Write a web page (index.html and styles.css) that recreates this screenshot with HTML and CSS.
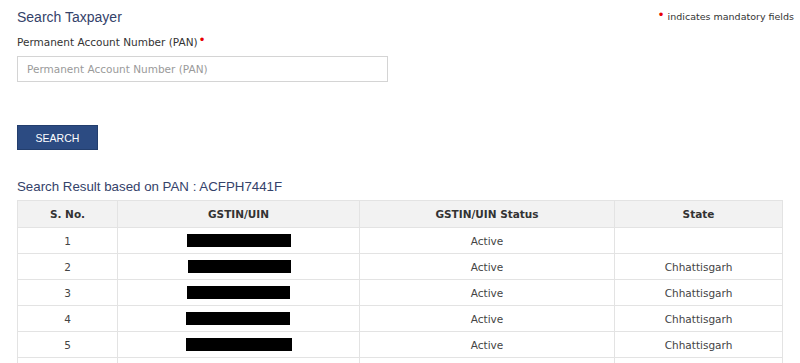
FILE: index.html
```html
<!DOCTYPE html>
<html>
<head>
  <link rel="stylesheet" href="styles.css">
</head>
<body>
  <div class="page">
    <div class="top-row">
      <h2 class="page-title">Search Taxpayer</h2>
      <p class="mandatory-note"><span class="req-dot">&bull;</span> indicates mandatory fields</p>
    </div>

    <form class="search-form">
      <label class="field-label" for="pan">Permanent Account Number (PAN)<span class="req">&bull;</span></label>
      <input type="text" id="pan" class="text-input" placeholder="Permanent Account Number (PAN)">
      <button type="button" class="search-button">SEARCH</button>
    </form>

    <h3 class="result-title">Search Result based on PAN : ACFPH7441F</h3>

    <table class="result-table">
      <thead>
        <tr>
          <th class="col-sno">S. No.</th>
          <th class="col-gstin">GSTIN/UIN</th>
          <th class="col-status">GSTIN/UIN Status</th>
          <th>State</th>
        </tr>
      </thead>
      <tbody>
        <tr>
          <td>1</td>
          <td><span class="masked" style="width: 104px;"></span></td>
          <td>Active</td>
          <td></td>
        </tr>
        <tr>
          <td>2</td>
          <td><span class="masked" style="width: 103px; margin-left: 2px;"></span></td>
          <td>Active</td>
          <td>Chhattisgarh</td>
        </tr>
        <tr>
          <td>3</td>
          <td><span class="masked" style="width: 103px;"></span></td>
          <td>Active</td>
          <td>Chhattisgarh</td>
        </tr>
        <tr>
          <td>4</td>
          <td><span class="masked" style="width: 104px; margin-left: -2px;"></span></td>
          <td>Active</td>
          <td>Chhattisgarh</td>
        </tr>
        <tr>
          <td>5</td>
          <td><span class="masked" style="width: 106px;"></span></td>
          <td>Active</td>
          <td>Chhattisgarh</td>
        </tr>
        <tr>
          <td></td>
          <td></td>
          <td></td>
          <td></td>
        </tr>
      </tbody>
    </table>
  </div>
</body>
</html>
```

FILE: styles.css
```css
html, body {
  margin: 0;
  padding: 0;
  background-color: #ffffff;
  overflow: hidden;
}

body {
  font-family: "DejaVu Sans", Verdana, sans-serif;
  color: #333333;
}

.page {
  width: 766px;
  padding: 0 0 0 17px;
}

.top-row {
  display: flex;
  justify-content: space-between;
  align-items: flex-start;
  height: 33px;
}

.page-title {
  margin: 9px 0 0 0;
  font-family: "Liberation Sans", Arial, sans-serif;
  font-size: 14px;
  font-weight: normal;
  color: #34426a;
}

.mandatory-note {
  margin: 8px -11px 0 0;
  font-size: 9.5px;
  color: #333333;
}

.req-dot,
.req {
  color: #e80000;
  font-size: 12px;
}

.req-dot {
  vertical-align: 1px;
}

.req {
  vertical-align: 2px;
  margin-left: 1px;
}

.search-form {
  display: flex;
  flex-direction: column;
  align-items: flex-start;
}

.field-label {
  font-size: 10.5px;
  color: #333333;
  height: 23px;
}

.text-input {
  width: 371px;
  height: 26px;
  box-sizing: border-box;
  border: 1px solid #d4d4d4;
  padding: 0 9px;
  font-family: "DejaVu Sans", Verdana, sans-serif;
  font-size: 10.5px;
  color: #333333;
  margin: 0;
}

.text-input::placeholder {
  color: #9a9a9a;
}

.search-button {
  margin-top: 43px;
  width: 81px;
  height: 25px;
  background-color: #2c4b82;
  border: 1px solid #233e6d;
  color: #ffffff;
  font-family: "Liberation Sans", Arial, sans-serif;
  font-size: 10.5px;
  padding: 0;
}

.result-title {
  margin: 29px 0 0 0;
  font-family: "Liberation Sans", Arial, sans-serif;
  font-size: 13.3px;
  font-weight: normal;
  color: #34426a;
  height: 21px;
}

.result-table {
  width: 766px;
  border-collapse: collapse;
  font-size: 10.5px;
  color: #444444;
}

.result-table th,
.result-table td {
  border: 1px solid #e3e3e3;
  text-align: center;
  padding: 0;
}

.result-table th {
  background-color: #f2f2f2;
  height: 26px;
  font-weight: bold;
  color: #333333;
}

.result-table td {
  height: 25px;
}

.col-sno {
  width: 99px;
}

.col-gstin {
  width: 241px;
}

.col-status {
  width: 254px;
}

.masked {
  display: inline-block;
  height: 13px;
  background-color: #000000;
  vertical-align: middle;
}
```
